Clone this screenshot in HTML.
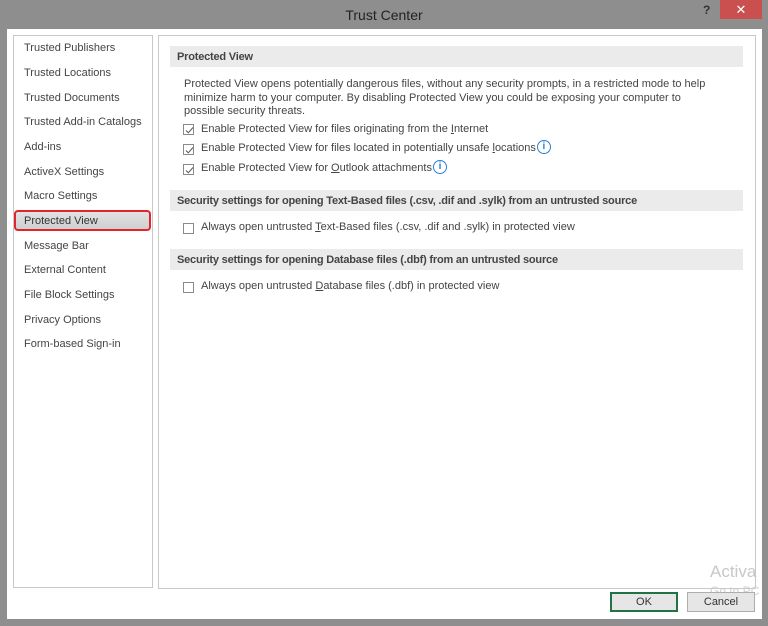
<!DOCTYPE html>
<html><head><style>
*{margin:0;padding:0;box-sizing:border-box}
body{width:768px;height:626px;background:#8e8e8e;font-family:"Liberation Sans",sans-serif;font-size:11px;color:#444;position:relative;overflow:hidden}
.a{position:absolute;white-space:nowrap}
.win{position:absolute;left:7px;top:29px;width:755px;height:590px;background:#fff}
.lp{position:absolute;left:13px;top:35px;width:140px;height:553px;border:1px solid #c8c8c8;background:#fff}
.rp{position:absolute;left:158px;top:35px;width:598px;height:554px;border:1px solid #c8c8c8;background:#fff}
.item{position:absolute;left:24px;font-size:11px;color:#444}
.hdr{position:absolute;left:170px;width:573px;height:21px;background:#ebebeb;font-weight:bold;color:#444;padding:5px 0 0 7px;font-size:11px;letter-spacing:-0.2px}
.cb{position:absolute;left:183px;width:11px;height:11px;border:1px solid #8a8a8a;background:#fff}
.cb svg{position:absolute;left:0;top:0}
.t{position:absolute;left:201px;font-size:11px;color:#444;white-space:nowrap;line-height:15px}
.info{display:inline-block;position:relative;top:-1px;width:14px;height:14px;border:1.5px solid #2a7fd4;border-radius:50%;color:#2a7fd4;font-size:10px;font-weight:bold;text-align:center;line-height:11px;vertical-align:middle;margin-left:1px}
.btn{position:absolute;top:592px;height:20px;background:#e6e6e6;border:1px solid #adadad;text-align:center;line-height:18px;color:#333;font-size:11px}
</style></head><body>
<div class="a" style="left:0;top:7px;width:768px;text-align:center;font-size:14px;color:#222">Trust Center</div>
<div class="a" style="left:703px;top:3px;font-size:12px;font-weight:bold;color:#333">?</div>
<div class="a" style="left:720px;top:0;width:42px;height:19px;background:#c9504f;color:#fff;text-align:center;font-size:13px;line-height:19px">✕</div>
<div class="win"></div>
<div class="lp"></div>
<div class="item" style="top:42px">Trusted Publishers</div>
<div class="item" style="top:67px">Trusted Locations</div>
<div class="item" style="top:92px">Trusted Documents</div>
<div class="item" style="top:116px">Trusted Add-in Catalogs</div>
<div class="item" style="top:141px">Add-ins</div>
<div class="item" style="top:166px">ActiveX Settings</div>
<div class="item" style="top:190px">Macro Settings</div>
<div class="a" style="left:14px;top:210px;width:137px;height:21px;background:linear-gradient(#e2e2e2,#cfcfcf);border:2px solid #e0262a;border-radius:4px"></div>
<div class="item" style="top:215px;color:#333">Protected View</div>
<div class="item" style="top:240px">Message Bar</div>
<div class="item" style="top:264px">External Content</div>
<div class="item" style="top:289px">File Block Settings</div>
<div class="item" style="top:314px">Privacy Options</div>
<div class="item" style="top:338px">Form-based Sign-in</div>
<div class="rp"></div>
<div class="hdr" style="top:46px">Protected View</div>
<div class="a" style="left:184px;top:78px;line-height:13.5px;white-space:normal;width:540px">Protected View opens potentially dangerous files, without any security prompts, in a restricted mode to help minimize harm to your computer. By disabling Protected View you could be exposing your computer to possible security threats.</div>
<div class="cb" style="top:124px"><svg width="11" height="11"><path d="M2 5.5 L4.3 7.8 L9 2.5" stroke="#555" fill="none" stroke-width="1"/></svg></div>
<div class="t" style="top:122px">Enable Protected View for files originating from the <u>I</u>nternet</div>
<div class="cb" style="top:144px"><svg width="11" height="11"><path d="M2 5.5 L4.3 7.8 L9 2.5" stroke="#555" fill="none" stroke-width="1"/></svg></div>
<div class="t" style="top:141px">Enable Protected View for files located in potentially unsafe <u>l</u>ocations<span class="info">i</span></div>
<div class="cb" style="top:164px"><svg width="11" height="11"><path d="M2 5.5 L4.3 7.8 L9 2.5" stroke="#555" fill="none" stroke-width="1"/></svg></div>
<div class="t" style="top:161px">Enable Protected View for <u>O</u>utlook attachments<span class="info">i</span></div>
<div class="hdr" style="top:190px">Security settings for opening Text-Based files (.csv, .dif and .sylk) from an untrusted source</div>
<div class="cb" style="top:223px"></div>
<div class="t" style="top:220px">Always open untrusted <u>T</u>ext-Based files (.csv, .dif and .sylk) in protected view</div>
<div class="hdr" style="top:249px">Security settings for opening Database files (.dbf) from an untrusted source</div>
<div class="cb" style="top:282px"></div>
<div class="t" style="top:279px">Always open untrusted <u>D</u>atabase files (.dbf) in protected view</div>
<div class="a" style="left:710px;top:562px;font-size:17px;color:#c8c8c8">Activa</div>
<div class="a" style="left:710px;top:584px;font-size:12px;color:#d0d0d0">Go to PC</div>
<div class="btn" style="left:610px;width:68px;border:2px solid #217346;line-height:16px">OK</div>
<div class="btn" style="left:687px;width:68px">Cancel</div>
</body></html>
